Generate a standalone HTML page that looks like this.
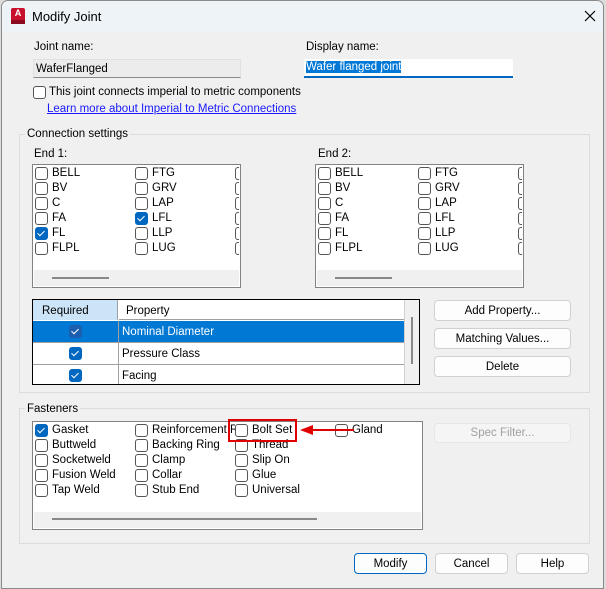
<!DOCTYPE html>
<html><head><style>
*{box-sizing:border-box;margin:0;padding:0}
body{width:606px;height:589px;background:#dcdcdc;font-family:"Liberation Sans",sans-serif;font-size:11.5px;line-height:15px;color:#000;position:relative;overflow:hidden}
.a{position:absolute;white-space:nowrap}
.win{position:absolute;left:1px;top:0;width:603px;height:589px;background:#f0f0f0;border:1px solid #8a8a8a;border-radius:7px 7px 0 0;overflow:hidden}
.title{position:absolute;left:0;top:0;width:100%;height:31px;background:#eef3f8}
.cb{position:absolute;width:13px;height:13px;border:1px solid #555;border-radius:3px;background:#fff}
.cb.on{background:#0067c0;border-color:#0067c0}
.cb.on:after{content:"";position:absolute;left:3px;top:1px;width:3px;height:6px;border:solid #fff;border-width:0 1px 1px 0;transform:rotate(45deg)}
.grp{position:absolute;border:1px solid #dcdcdc}
.lst{position:absolute;background:#fff;border:1px solid #828282}
.btn{position:absolute;background:#fdfdfd;border:1px solid #d0d0d0;border-radius:4px;text-align:center;line-height:20px}
</style></head><body>
<div class="win">
<div class="title"></div>
</div>
<div class="a" style="left:11px;top:8px;width:14px;height:16px;background:#c8102e;border-radius:2px;color:#fff;font-size:9px;font-weight:bold;text-align:center;line-height:11px">A<div style="position:absolute;left:0;bottom:0;width:14px;height:4px;background:#8a0a1e"></div></div>
<div class="a" style="left:32px;top:8px;font-size:13px;line-height:17px">Modify Joint</div>
<svg class="a" style="left:584px;top:10px" width="12" height="12"><path d="M1 1L11 11M11 1L1 11" stroke="#000" stroke-width="1.2"/></svg>

<div class="a" style="left:34px;top:40px">Joint name:</div>
<div class="a" style="left:33px;top:59px;width:208px;height:19px;background:#ececec;border:1px solid #e0e0e0;border-bottom-color:#8a8a8a;padding:2px 2px">WaferFlanged</div>
<div class="a" style="left:306px;top:40px">Display name:</div>
<div class="a" style="left:304px;top:59px;width:209px;height:19px;background:#fff;border-bottom:2px solid #0067c0;padding:1px 2px"><span style="background:#0078d7;color:#fff">Wafer flanged joint</span></div>

<div class="cb" style="left:33px;top:86px"></div>
<div class="a" style="left:49px;top:85px">This joint connects imperial to metric components</div>
<div class="a" style="left:47px;top:102px;color:#1a1aff;text-decoration:underline">Learn more about Imperial to Metric Connections</div>

<div class="grp" style="left:19px;top:134px;width:571px;height:259px"></div>
<div class="a" style="left:25px;top:127px;background:#f0f0f0;padding:0 2px">Connection settings</div>

<div class="a" style="left:34px;top:147px">End 1:</div>
<div class="lst" style="left:32px;top:164px;width:209px;height:124px"><div style="position:absolute;left:1px;bottom:1px;width:205px;height:16px;background:#f0f0f0"><div style="position:absolute;left:18px;top:7px;width:57px;height:2px;background:#888"></div></div></div>
<div class="a" style="left:318px;top:147px">End 2:</div>
<div class="lst" style="left:315px;top:164px;width:209px;height:124px"><div style="position:absolute;left:1px;bottom:1px;width:205px;height:16px;background:#f0f0f0"><div style="position:absolute;left:18px;top:7px;width:57px;height:2px;background:#888"></div></div></div>

<div class="grp" style="left:19px;top:408px;width:571px;height:136px"></div>
<div class="a" style="left:25px;top:402px;background:#f0f0f0;padding:0 2px">Fasteners</div>
<div class="lst" style="left:32px;top:421px;width:391px;height:109px"><div style="position:absolute;left:1px;bottom:1px;width:387px;height:16px;background:#f0f0f0"><div style="position:absolute;left:18px;top:6px;width:265px;height:2px;background:#888"></div></div></div>

<div class="a" style="left:32px;top:299px;width:388px;height:86px;border:1px solid #000;background:#fff"></div>
<div class="a" style="left:33px;top:300px;width:85px;height:20px;background:#cce4f7;border-right:1px solid #a0a0a0;padding:4px 0 0 9px">Required</div>
<div class="a" style="left:119px;top:300px;width:285px;height:20px;padding:4px 0 0 7px;border-bottom:1px solid #a0a0a0">Property</div>
<div class="a" style="left:33px;top:321px;width:371px;height:21px;background:#0078d4"></div>
<div class="a" style="left:118px;top:321px;width:1px;height:63px;background:#a0a0a0"></div>
<div class="a" style="left:33px;top:342px;width:371px;height:1px;background:#a0a0a0"></div>
<div class="a" style="left:33px;top:364px;width:371px;height:1px;background:#a0a0a0"></div>
<div class="a" style="left:122px;top:325px;color:#fff">Nominal Diameter</div>
<div class="a" style="left:122px;top:347px">Pressure Class</div>
<div class="a" style="left:122px;top:369px">Facing</div>
<div class="cb on" style="left:69px;top:325px;background:#1b5fae;border-color:#1b5fae"></div>
<div class="cb on" style="left:69px;top:347px"></div>
<div class="cb on" style="left:69px;top:369px"></div>
<div class="a" style="left:404px;top:300px;width:15px;height:84px;background:#f0f0f0;border-left:1px solid #d0d0d0"></div>
<div class="a" style="left:411px;top:317px;width:2px;height:47px;background:#888"></div>

<div class="btn" style="left:434px;top:300px;width:137px;height:21px">Add Property...</div>
<div class="btn" style="left:434px;top:328px;width:137px;height:21px">Matching Values...</div>
<div class="btn" style="left:434px;top:356px;width:137px;height:21px">Delete</div>
<div class="btn" style="left:434px;top:423px;width:137px;height:20px;line-height:19px;color:#a0a0a0;background:#f5f5f5;border-color:#e6e6e6">Spec Filter...</div>

<div class="btn" style="left:354px;top:553px;width:73px;height:21px;border:1px solid #0067c0">Modify</div>
<div class="btn" style="left:435px;top:553px;width:73px;height:21px">Cancel</div>
<div class="btn" style="left:516px;top:553px;width:73px;height:21px">Help</div>

<div id="items"></div>
<script>
var h='';
function it(x,y,t,on,w){h+='<div class="cb'+(on?' on':'')+'" style="left:'+x+'px;top:'+(y-6)+'px"></div>';if(t)h+='<div class="a" style="left:'+(x+17)+'px;top:'+(y-7)+'px;'+(w?'width:'+w+'px;overflow:hidden':'')+'">'+t+'</div>';}
var e1=['BELL','BV','C','FA','FL','FLPL'],e2=['FTG','GRV','LAP','LFL','LLP','LUG'];
for(var i=0;i<6;i++){var y=173+i*15;
it(35,y,e1[i],i==4);it(135,y,e2[i],i==3);
it(318,y,e1[i],0);it(418,y,e2[i],0);
h+='<div style="position:absolute;left:235px;top:'+(y-6)+'px;width:4px;height:13px;border:1px solid #555;border-right:none;border-radius:3px 0 0 3px"></div>';
h+='<div style="position:absolute;left:518px;top:'+(y-6)+'px;width:4px;height:13px;border:1px solid #555;border-right:none;border-radius:3px 0 0 3px"></div>';}
var f=[['Gasket','Reinforcement Ring','Bolt Set','Gland'],['Buttweld','Backing Ring','Thread'],['Socketweld','Clamp','Slip On'],['Fusion Weld','Collar','Glue'],['Tap Weld','Stub End','Universal']];
for(var r=0;r<5;r++)for(var c=0;c<f[r].length;c++)it(35+c*100,430+r*15,f[r][c],r==0&&c==0,83);
document.getElementById('items').innerHTML=h;
</script>
<div class="a" style="left:228px;top:419px;width:69px;height:23px;border:2px solid #e00000"></div>
<div class="a" style="left:312px;top:429px;width:42px;height:2px;background:#e00000"></div>
<div class="a" style="left:300px;top:425px;width:0;height:0;border-top:5px solid transparent;border-bottom:5px solid transparent;border-right:13px solid #e00000"></div>
</body></html>
